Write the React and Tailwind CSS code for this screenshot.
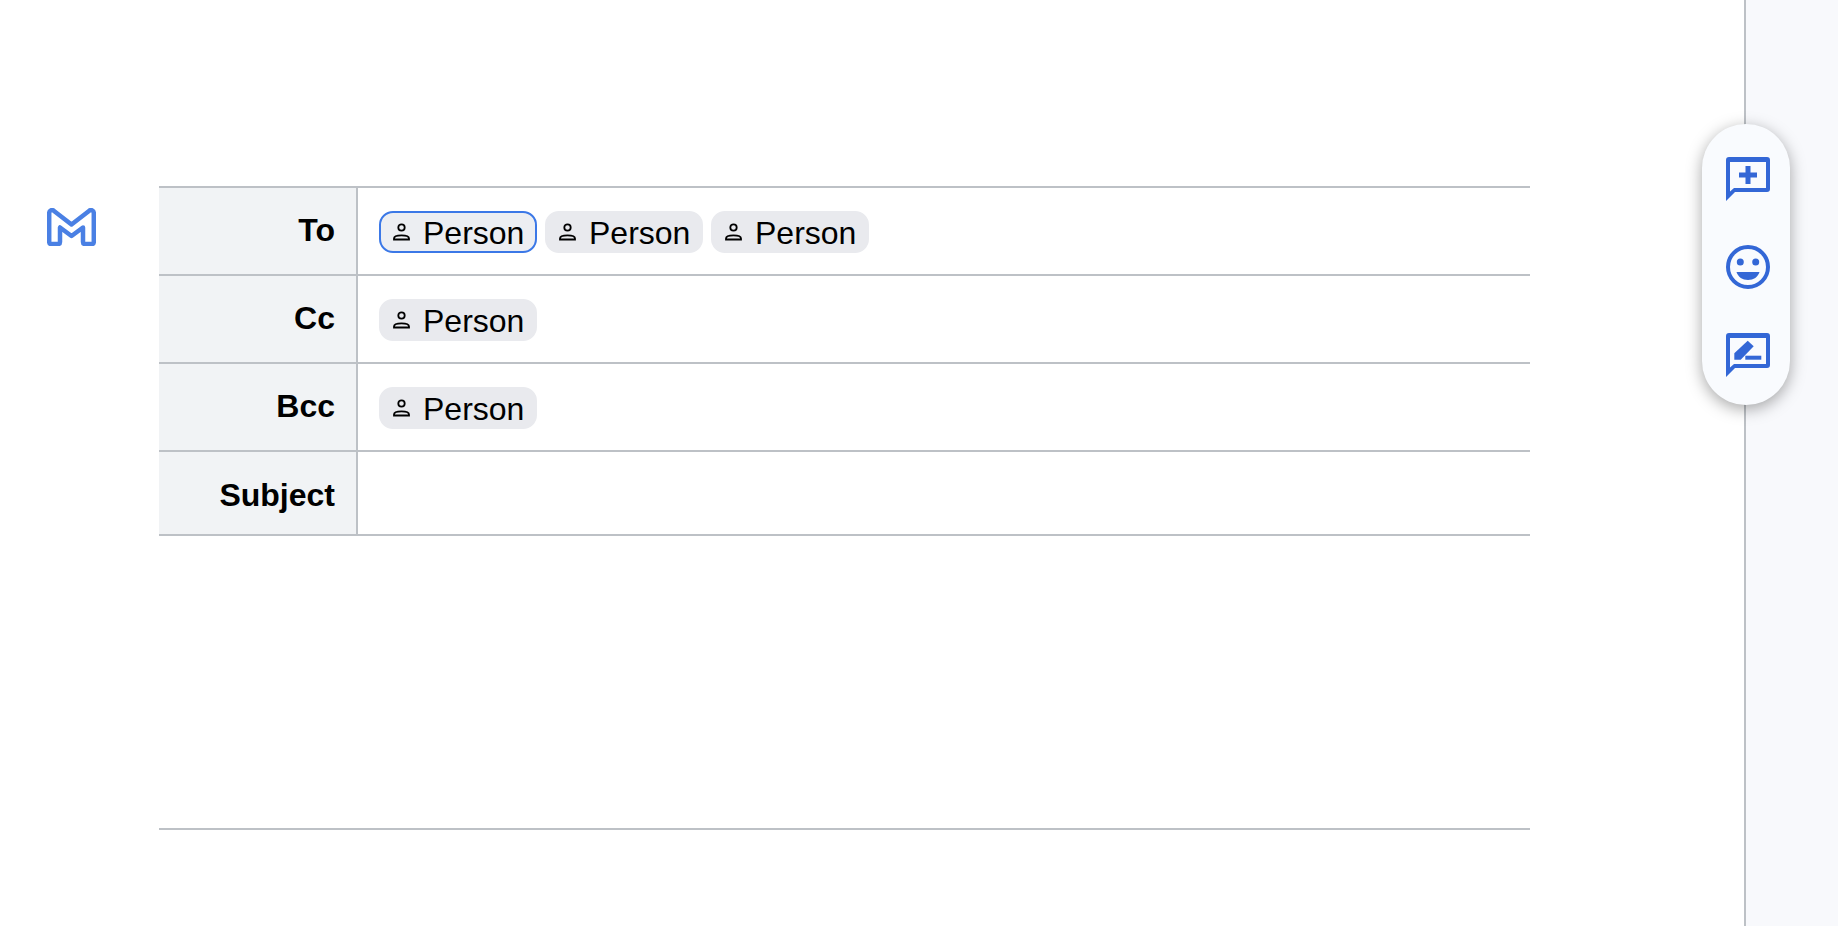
import React from "react";

function PersonIcon() {
  return (
    <svg width="17" height="18" viewBox="0 0 17 18" fill="none" stroke="currentColor" strokeWidth="1.8" className="shrink-0">
      <circle cx="8.500" cy="4.500" r="3.200" />
      <path d="M1 16.500v-1c0-2 3.700-3.200 7.500-3.200s7.500 1.200 7.500 3.200v1z" />
    </svg>
  );
}

function Chip({ focused }) {
  return (
    <div
      className={
        "flex h-[42px] w-[158px] items-center gap-[13px] rounded-[14px] border-2 pl-[12px] text-[32px] text-black " +
        (focused ? "border-[#3b78e7] bg-[#eceef2]" : "border-[#e9eaee] bg-[#e9eaee]")
      }
    >
      <PersonIcon />
      <span className="leading-none pt-[1px]">Person</span>
    </div>
  );
}

function Row({ label, h, pad = "pb-[2px]", children }) {
  return (
    <div className={"flex border-b-2 border-[#bdc1c6] " + h}>
      <div className={"flex w-[199px] shrink-0 items-center justify-end border-r-2 border-[#bdc1c6] bg-[#f1f3f5] pr-[21px] text-[32px] font-bold text-black " + pad}>
        {label}
      </div>
      <div className="flex flex-1 items-center gap-[8px] pl-[21px] pt-[2px]">{children}</div>
    </div>
  );
}

function MailLogo() {
  return (
    <svg width="49" height="38" viewBox="0 0 49 38" fill="none" stroke="#4a80e4" strokeWidth="4.500" strokeLinejoin="round">
      <path d="M2.200 5c0-2.500 2.500-3.700 4.500-2.300L24.500 16.500 42.300 2.700C44.300 1.300 46.800 2.500 46.800 5v29c0 1.200-.8 2-2 2h-6.800c-1.200 0-2-.8-2-2V19.500L24.500 28 13 19.500V34c0 1.200-.8 2-2 2H4.200c-1.200 0-2-.8-2-2z" />
    </svg>
  );
}

function AddCommentIcon() {
  return (
    <svg width="44" height="44" viewBox="0 0 44 44" fill="#3367d6">
      <path
        fillRule="evenodd"
        d="M3 0h38a3 3 0 0 1 3 3v29a3 3 0 0 1-3 3H9l-9 9V3a3 3 0 0 1 3-3zM4 5v29.500L8 31h32V5z"
      />
      <path d="M19.500 9h5v6.500H31v5h-6.500V27h-5v-6.500H13v-5h6.500z" />
    </svg>
  );
}

function SmileIcon() {
  return (
    <svg width="44" height="44" viewBox="0 0 44 44" fill="#3367d6">
      <circle cx="22" cy="22" r="20" fill="none" stroke="#3367d6" strokeWidth="4" />
      <circle cx="14.300" cy="17" r="3.500" />
      <circle cx="29.700" cy="17" r="3.500" />
      <path d="M10.500 27h23c-1.500 5-6 8-11.500 8s-10-3-11.500-8z" />
    </svg>
  );
}

function EditCommentIcon() {
  return (
    <svg width="44" height="44" viewBox="0 0 44 44" fill="#3367d6">
      <path
        fillRule="evenodd"
        d="M3 0h38a3 3 0 0 1 3 3v29a3 3 0 0 1-3 3H9l-9 9V3a3 3 0 0 1 3-3zM4 5v29.500L8 31h32V5z"
      />
      <path d="M8.300 20.300 21.700 7.700l6 5.600-13 13.400H8.300z" />
      <path d="M19.300 22.700h16v4h-16z" />
    </svg>
  );
}

export default function App() {
  return (
    <div className="relative flex h-[926px] w-full overflow-hidden bg-white font-['Liberation_Sans',Arial,sans-serif]">
      <div className="flex flex-1 pt-[186px]">
        <div className="w-[159px] shrink-0 pl-[47px] pt-[22px]">
          <MailLogo />
        </div>
        <div className="w-[1371px]">
          <div className="border-t-2 border-[#bdc1c6]">
            <Row label="To" h="h-[88px]">
              <Chip focused />
              <Chip />
              <Chip />
            </Row>
            <Row label="Cc" h="h-[88px]">
              <Chip />
            </Row>
            <Row label="Bcc" h="h-[88px]">
              <Chip />
            </Row>
            <Row label="Subject" h="h-[84px]" pad="pt-[4px]" />
          </div>
          <div className="h-[294px] border-b-2 border-[#bdc1c6]" />
        </div>
      </div>
      <div className="w-[94px] shrink-0 border-l-2 border-[#bdc1c6] bg-[#f8f9fc]" />
      <div className="absolute left-[1702px] top-[124px] flex h-[281px] w-[88px] flex-col items-start gap-[44px] rounded-[44px] bg-[#f9fbfe] pl-[24px] pt-[33px] shadow-[0_4px_16px_rgba(0,0,0,0.35)]">
        <AddCommentIcon />
        <SmileIcon />
        <EditCommentIcon />
      </div>
    </div>
  );
}
